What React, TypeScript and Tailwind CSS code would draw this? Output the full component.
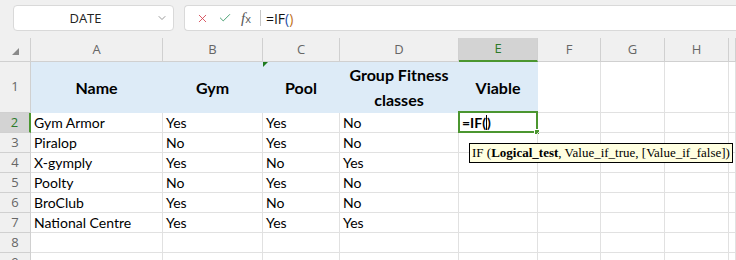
import React from 'react'
import { X, Check, ChevronDown } from 'lucide-react'

const cols = ['A', 'B', 'C', 'D', 'E', 'F', 'G', 'H', '']

const rows: string[][] = [
  ['Gym Armor', 'Yes', 'Yes', 'No'],
  ['Piralop', 'No', 'Yes', 'No'],
  ['X-gymply', 'Yes', 'No', 'Yes'],
  ['Poolty', 'No', 'Yes', 'No'],
  ['BroClub', 'Yes', 'No', 'No'],
  ['National Centre', 'Yes', 'Yes', 'Yes'],
  [],
  [],
]

const headers = ['Name', 'Gym', 'Pool', 'Group Fitness classes', 'Viable']

export default function App() {
  return (
    <div className="relative w-[736px] h-[260px] overflow-hidden bg-[#f0f0f0] font-['Lato','Open_Sans',sans-serif]">
      {/* name box + formula bar */}
      <div className="flex h-[38px] pt-[5px]">
        <div className="ml-[13px] w-[161px] h-[26px] bg-white border border-[#d9d9d9] rounded-[4px] flex items-center relative">
          <span className="flex-1 text-center text-[13px] text-[#222] font-['Open_Sans',sans-serif] pr-[16px] pt-[1px]">DATE</span>
          <ChevronDown size={12} strokeWidth={1.5} className="absolute right-[5px] text-[#777]" />
        </div>
        <div className="ml-[10px] flex-1 h-[26px] bg-white border-y border-l border-[#d9d9d9] rounded-l-[4px] flex items-center">
          <X size={13} strokeWidth={1.6} className="ml-[11px] text-[#d4424f]" />
          <Check size={14} strokeWidth={1.6} className="ml-[9px] text-[#3f9b6b]" />
          <span className="ml-[9px] text-[15px] italic text-[#555] font-['Liberation_Serif',serif] leading-none">
            f<span className="text-[11px] not-italic font-['Open_Sans',sans-serif]">x</span>
          </span>
          <div className="ml-[9px] w-px h-[16px] bg-[#c8c8c8]" />
          <span className="ml-[5px] text-[14px] text-[#111] font-['Open_Sans',sans-serif]">=IF<span className="text-[#1f4fa8]">(</span><span className="text-[#c0701a]">)</span></span>
        </div>
      </div>

      {/* sheet grid */}
      <div className="grid grid-cols-[31px_132px_100px_77px_119px_79px_63px_64px_64px_7px] grid-rows-[24px_51px_repeat(9,20px)] bg-white">
        {/* column headers */}
        <div className="bg-[#f0f0f0] border-r border-b border-[#d0d0d0] flex items-center justify-center">
          <div className="w-0 h-0 border-l-[7px] border-l-transparent border-b-[7px] border-b-[#8a8a8a] ml-[1px] mt-[3px]" />
        </div>
        {cols.map((c) =>
          c === 'E' ? (
            <div key={c} className="bg-[#d3d3d3] border-r border-[#d0d0d0] border-b-2 border-b-[#4b9630] flex items-center justify-center text-[13px] text-[#2d7a2a] font-['Open_Sans',sans-serif]">
              {c}
            </div>
          ) : (
            <div key={c} className="bg-[#f0f0f0] border-r border-b border-[#d0d0d0] flex items-center justify-center text-[13px] text-[#666] font-['Open_Sans',sans-serif]">
              {c}
            </div>
          )
        )}

        {/* row 1 */}
        <div className="bg-[#f0f0f0] border-r border-b border-[#d0d0d0] flex items-center justify-center text-[13px] text-[#666] font-['Open_Sans',sans-serif]">1</div>
        {headers.map((h, i) => (
          <div key={h} className="relative bg-[#ddebf7] border-r border-b border-[#ddebf7] flex items-center justify-center text-center font-bold text-[16px] leading-[25px] text-black px-[4px]">
            {i === 2 && (
              <div className="absolute left-0 top-0 w-0 h-0 border-t-[5px] border-t-[#1e7b1e] border-r-[5px] border-r-transparent" />
            )}
            {h === 'Group Fitness classes' ? (
              <span className="pb-[1px]">Group Fitness<br />classes</span>
            ) : (
              h
            )}
          </div>
        ))}
        {[0, 1, 2, 3].map((k) => (
          <div key={k} className="border-r border-b border-[#e1e1e1]" />
        ))}

        {/* data rows */}
        {rows.map((r, ri) => (
          <React.Fragment key={ri}>
            {ri === 0 ? (
              <div className="bg-[#d3d3d3] border-r-2 border-r-[#4b9630] border-b border-b-[#d0d0d0] flex items-center justify-center text-[13px] text-[#2d7a2a] font-['Open_Sans',sans-serif]">2</div>
            ) : (
              <div className="bg-[#f0f0f0] border-r border-b border-[#d0d0d0] flex items-center justify-center text-[13px] text-[#666] font-['Open_Sans',sans-serif]">{ri + 2}</div>
            )}
            {[0, 1, 2, 3, 4, 5, 6, 7, 8].map((ci) => (
              <div key={ci} className="relative border-r border-b border-[#e1e1e1] flex items-center pl-[3px] text-[14px] text-black whitespace-nowrap">
                {r[ci] ?? ''}
                {ri === 0 && ci === 4 && (
                  <div className="absolute -left-px -top-[2px] -right-px -bottom-px border-2 border-[#4b9630] flex items-center pl-[2px] font-bold text-[14px]">
                    =IF(<span className="w-px h-[15px] bg-black" />)
                    <div className="absolute -right-[4px] -bottom-[4px] w-[6px] h-[6px] bg-[#4b9630] border border-white" />
                  </div>
                )}
              </div>
            ))}
          </React.Fragment>
        ))}
      </div>

      {/* function tooltip */}
      <div className="absolute left-[469px] top-[143px] h-[20px] px-[2px] bg-[#ffffe1] border border-black flex items-center text-[13px] text-black whitespace-nowrap font-['Liberation_Serif',serif]">
        IF (<b>Logical_test</b>, Value_if_true, [Value_if_false])
      </div>
    </div>
  )
}
